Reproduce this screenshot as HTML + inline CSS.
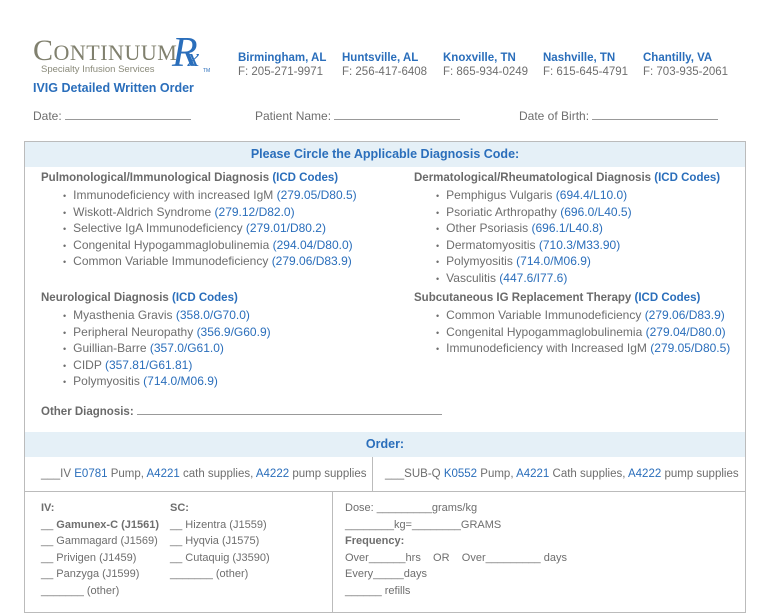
<!DOCTYPE html>
<html><head><meta charset="utf-8"><style>
body{margin:0;width:768px;height:602px;overflow:hidden;background:#fff;font-family:"Liberation Sans",sans-serif;color:#6e6e6e;font-size:11px;position:relative}
.a{position:absolute;white-space:nowrap}
.b{color:#2a6ebb}
.h{font-weight:bold;color:#6a6a6a;font-size:11.5px;line-height:16px;margin-bottom:1px}
.ln{display:inline-block;border-bottom:1px solid #999;vertical-align:baseline}
ul{margin:0;padding:0;list-style:none;font-size:12px}
li{height:16.5px;line-height:16.5px}
li:before{content:"•";margin-right:7px;font-size:9px}
</style></head><body>
<div class="a" style="left:33px;top:34px;font-family:'Liberation Serif',serif;color:#80806e;font-size:30px;letter-spacing:0.5px;line-height:34px">C<span style="font-size:22px">ONTINUUM</span></div>
<div class="a" style="left:172px;top:30px;font-family:'Liberation Serif',serif;color:#2a6ebb;font-size:42px;font-style:italic;line-height:46px">R<span style="font-size:26px;margin-left:-10px">x</span></div>
<div class="a" style="left:203px;top:68px;font-size:5px;color:#2a6ebb">TM</div>
<div class="a" style="left:41px;top:64px;font-size:9.5px;color:#8a8a7a">Specialty Infusion Services</div>
<div class="a b" style="left:33px;top:81px;font-size:12.5px;font-weight:bold">IVIG Detailed Written Order</div>

<div class="a" style="left:238px;top:51px;font-size:11.5px;line-height:14px"><b class="b">Birmingham, AL</b><br><span>F: 205-271-9971</span></div>
<div class="a" style="left:342px;top:51px;font-size:11.5px;line-height:14px"><b class="b">Huntsville, AL</b><br>F: 256-417-6408</div>
<div class="a" style="left:443px;top:51px;font-size:11.5px;line-height:14px"><b class="b">Knoxville, TN</b><br>F: 865-934-0249</div>
<div class="a" style="left:543px;top:51px;font-size:11.5px;line-height:14px"><b class="b">Nashville, TN</b><br>F: 615-645-4791</div>
<div class="a" style="left:643px;top:51px;font-size:11.5px;line-height:14px"><b class="b">Chantilly, VA</b><br>F: 703-935-2061</div>

<div class="a" style="left:33px;top:109px;font-size:12px">Date: <span class="ln" style="width:126px"></span></div>
<div class="a" style="left:255px;top:109px;font-size:12px">Patient Name: <span class="ln" style="width:126px"></span></div>
<div class="a" style="left:519px;top:109px;font-size:12px">Date of Birth: <span class="ln" style="width:126px"></span></div>

<div class="a" style="left:24px;top:141px;width:720px;height:470px;border:1px solid #bbb"></div>
<div class="a" style="left:25px;top:142px;width:720px;height:25px;background:#e5f0f7"></div>
<div class="a b" style="left:25px;top:147px;width:720px;text-align:center;font-size:12.5px;font-weight:bold">Please Circle the Applicable Diagnosis Code:</div>

<div class="a" style="left:41px;top:170px"><div class="h">Pulmonological/Immunological Diagnosis <span class="b">(ICD Codes)</span></div>
<ul style="margin-left:22px"><li>Immunodeficiency with increased IgM <span class="b">(279.05/D80.5)</span></li><li>Wiskott-Aldrich Syndrome <span class="b">(279.12/D82.0)</span></li><li>Selective IgA Immunodeficiency <span class="b">(279.01/D80.2)</span></li><li>Congenital Hypogammaglobulinemia <span class="b">(294.04/D80.0)</span></li><li>Common Variable Immunodeficiency <span class="b">(279.06/D83.9)</span></li></ul></div>

<div class="a" style="left:414px;top:170px"><div class="h">Dermatological/Rheumatological Diagnosis <span class="b">(ICD Codes)</span></div>
<ul style="margin-left:22px"><li>Pemphigus Vulgaris <span class="b">(694.4/L10.0)</span></li><li>Psoriatic Arthropathy <span class="b">(696.0/L40.5)</span></li><li>Other Psoriasis <span class="b">(696.1/L40.8)</span></li><li>Dermatomyositis <span class="b">(710.3/M33.90)</span></li><li>Polymyositis <span class="b">(714.0/M06.9)</span></li><li>Vasculitis <span class="b">(447.6/I77.6)</span></li></ul></div>

<div class="a" style="left:41px;top:290px"><div class="h">Neurological Diagnosis <span class="b">(ICD Codes)</span></div>
<ul style="margin-left:22px"><li>Myasthenia Gravis <span class="b">(358.0/G70.0)</span></li><li>Peripheral Neuropathy <span class="b">(356.9/G60.9)</span></li><li>Guillian-Barre <span class="b">(357.0/G61.0)</span></li><li>CIDP <span class="b">(357.81/G61.81)</span></li><li>Polymyositis <span class="b">(714.0/M06.9)</span></li></ul></div>

<div class="a" style="left:414px;top:290px"><div class="h">Subcutaneous IG Replacement Therapy <span class="b">(ICD Codes)</span></div>
<ul style="margin-left:22px"><li>Common Variable Immunodeficiency <span class="b">(279.06/D83.9)</span></li><li>Congenital Hypogammaglobulinemia <span class="b">(279.04/D80.0)</span></li><li>Immunodeficiency with Increased IgM <span class="b">(279.05/D80.5)</span></li></ul></div>

<div class="a h" style="left:41px;top:404px">Other Diagnosis: <span class="ln" style="width:305px"></span></div>

<div class="a" style="left:25px;top:432px;width:720px;height:25px;background:#e5f0f7"></div>
<div class="a b" style="left:25px;top:437px;width:720px;text-align:center;font-size:12.5px;font-weight:bold">Order:</div>
<div class="a" style="left:372px;top:457px;width:1px;height:34px;background:#bbb"></div>
<div class="a" style="left:25px;top:491px;width:720px;height:1px;background:#bbb"></div>
<div class="a" style="left:332px;top:492px;width:1px;height:120px;background:#bbb"></div>
<div class="a" style="left:41px;top:468px;font-size:11.5px">___IV <span class="b">E0781</span> Pump, <span class="b">A4221</span> cath supplies, <span class="b">A4222</span> pump supplies</div>
<div class="a" style="left:385px;top:468px;font-size:11.5px">___SUB-Q <span class="b">K0552</span> Pump, <span class="b">A4221</span> Cath supplies, <span class="b">A4222</span> pump supplies</div>

<div class="a" style="left:41px;top:500px;line-height:16.5px"><b>IV:</b><br>__ <b>Gamunex-C (J1561)</b><br>__ Gammagard (J1569)<br>__ Privigen (J1459)<br>__ Panzyga (J1599)<br>_______ (other)</div>
<div class="a" style="left:170px;top:500px;line-height:16.5px"><b>SC:</b><br>__ Hizentra (J1559)<br>__ Hyqvia (J1575)<br>__ Cutaquig (J3590)<br>_______ (other)</div>
<div class="a" style="left:345px;top:500px;line-height:16.5px">Dose: _________grams/kg<br>________kg=________GRAMS<br><b>Frequency:</b><br>Over______hrs &nbsp;&nbsp; OR &nbsp;&nbsp; Over_________ days<br>Every_____days<br>______ refills</div>
</body></html>
